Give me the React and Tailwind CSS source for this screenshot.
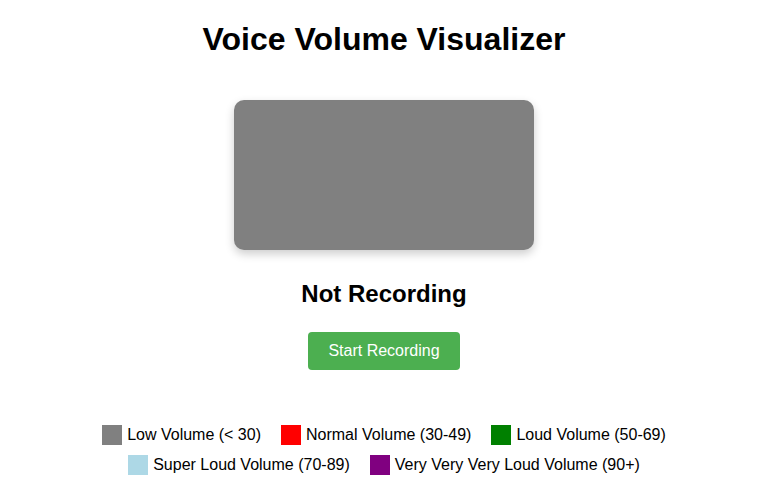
import React from "react";

const levels = [
  { label: "Low Volume (< 30)", color: "bg-[#808080]" },
  { label: "Normal Volume (30-49)", color: "bg-[#ff0000]" },
  { label: "Loud Volume (50-69)", color: "bg-[#008000]" },
  { label: "Super Loud Volume (70-89)", color: "bg-[#add8e6]" },
  { label: "Very Very Very Loud Volume (90+)", color: "bg-[#800080]" },
];

const App = () => {
  return (
    <div className="min-h-screen bg-white text-black flex flex-col items-center font-['Liberation_Sans',Arial,sans-serif]">
      <h1 className="mt-[21px] text-[32px] leading-[37px] font-bold">
        Voice Volume Visualizer
      </h1>

      <div className="mt-[42px] w-[300px] h-[150px] rounded-[10px] bg-[#808080] shadow-[0_4px_10px_rgba(0,0,0,0.2)]" />

      <h2 className="mt-[30px] text-[24px] leading-[28px] font-bold">
        Not Recording
      </h2>

      <button className="mt-[24px] px-5 py-[10px] text-base leading-[18px] text-white bg-[#4caf50] rounded">
        Start Recording
      </button>

      <div className="mt-[50px] w-[600px] flex flex-wrap justify-center">
        {levels.map((l) => (
          <div key={l.label} className="flex items-center mx-[10px] my-[5px]">
            <span className={`w-5 h-5 mr-[5px] ${l.color}`} />
            <span className="text-base leading-[20px]">{l.label}</span>
          </div>
        ))}
      </div>
    </div>
  );
};

export default App;
